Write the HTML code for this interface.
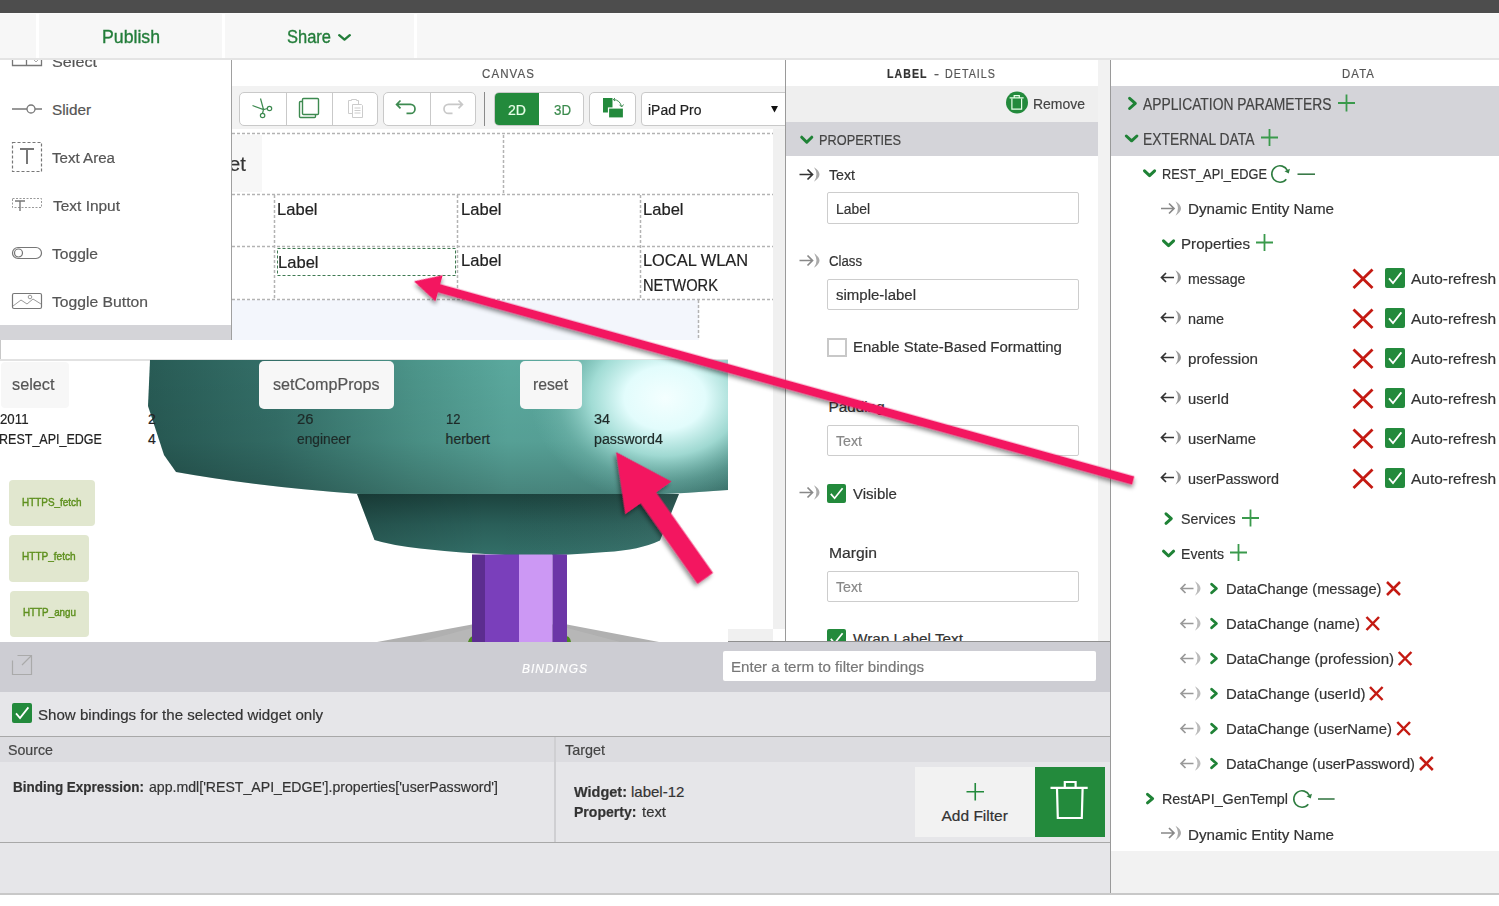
<!DOCTYPE html>
<html><head><meta charset="utf-8">
<style>
*{box-sizing:border-box;margin:0;padding:0}
html,body{width:1499px;height:906px;overflow:hidden;background:#fff;font-family:"Liberation Sans",sans-serif;color:#333}
.a{position:absolute}
.t{position:absolute;white-space:nowrap;line-height:1;-webkit-text-stroke:0.2px currentColor}
.clip{position:absolute;overflow:hidden}
svg{position:absolute;left:0;top:0;overflow:visible}
</style></head><body>
<div class="a" style="left:0px;top:0px;width:1499px;height:13px;background:#4d4d4d;"></div>
<div class="a" style="left:0px;top:13px;width:1499px;height:1px;background:#fafafa;"></div>
<div class="a" style="left:0px;top:14px;width:1499px;height:44px;background:#f7f7f7;"></div>
<div class="a" style="left:0px;top:58px;width:1499px;height:2px;background:#e4e4e4;"></div>
<div class="a" style="left:36px;top:14px;width:3px;height:44px;background:#ffffff;"></div>
<div class="a" style="left:222px;top:14px;width:3px;height:44px;background:#ffffff;"></div>
<div class="a" style="left:414px;top:14px;width:3px;height:44px;background:#ffffff;"></div>
<div class="t" style="left:102.0px;top:29.2px;font-size:17.5px;color:#237d3a;transform:scaleX(1.011);transform-origin:0 0;-webkit-text-stroke:0.35px #237d3a;">Publish</div>
<div class="t" style="left:287.0px;top:29.2px;font-size:17.5px;color:#237d3a;transform:scaleX(0.942);transform-origin:0 0;-webkit-text-stroke:0.35px #237d3a;">Share</div>
<svg width="1499" height="906"><polyline points="339.2,35.2 344.5,39.6 349.8,35.2" fill="none" stroke="#237d3a" stroke-width="2.4" stroke-linecap="round" stroke-linejoin="round"/></svg>
<div class="clip" style="left:0;top:60px;width:231px;height:280px;background:#fff">
<div class="t" style="left:52.0px;top:-6.0px;font-size:15.3px;color:#555;transform:scaleX(1.058);transform-origin:0 0;">Select</div>
<div class="t" style="left:52.0px;top:42.0px;font-size:15.3px;color:#555;">Slider</div>
<div class="t" style="left:52.0px;top:90.0px;font-size:15.3px;color:#555;transform:scaleX(0.988);transform-origin:0 0;">Text Area</div>
<div class="t" style="left:53.0px;top:138.0px;font-size:15.3px;color:#555;transform:scaleX(1.010);transform-origin:0 0;">Text Input</div>
<div class="t" style="left:52.0px;top:186.0px;font-size:15.3px;color:#555;transform:scaleX(1.020);transform-origin:0 0;">Toggle</div>
<div class="t" style="left:52.0px;top:234.0px;font-size:15.3px;color:#555;transform:scaleX(1.026);transform-origin:0 0;">Toggle Button</div>
<div class="a" style="left:0px;top:265px;width:231px;height:15px;background:#d4d4d8;"></div>
<div class="t" style="left:35.0px;top:277.3px;font-size:15px;color:#333;transform:scaleX(0.800);transform-origin:0 0;">OTHER</div>
<svg width="231" height="280"><path d="M12.5 -4V5.5H41.5V-4M26.5 -4V5.5" stroke="#777" stroke-width="1.3" fill="none"/><path d="M34 0L36 2L38 0" stroke="#aaa" fill="none"/><path d="M12 49H27M35 49H42" stroke="#777" stroke-width="1.3"/><circle cx="31" cy="49" r="4" stroke="#777" stroke-width="1.3" fill="none"/><rect x="12.5" y="82.5" width="29" height="29" stroke="#777" stroke-width="1.2" stroke-dasharray="3 2" fill="none"/><path d="M20 89H34M27 89V104" stroke="#777" stroke-width="2" fill="none"/><rect x="12.5" y="138.5" width="29" height="9" stroke="#999" stroke-width="1" stroke-dasharray="2 1.5" fill="none"/><path d="M15 141H25M20 141V151" stroke="#777" stroke-width="1.4" fill="none"/><rect x="12.5" y="187.5" width="29" height="11" rx="5.5" stroke="#777" stroke-width="1.2" fill="none"/><circle cx="18.5" cy="193" r="4" stroke="#777" stroke-width="1.2" fill="none"/><rect x="12.5" y="233.5" width="29" height="15" rx="1.5" stroke="#777" stroke-width="1.2" fill="none"/><path d="M13 246L21 240L27 244L33 239L41 244" stroke="#999" stroke-width="1" fill="none"/><circle cx="30" cy="237" r="1.8" stroke="#999" stroke-width="1" fill="none"/></svg></div>
<div class="a" style="left:231px;top:60px;width:1px;height:280px;background:#a0a0a0;"></div>
<div class="clip" style="left:232px;top:60px;width:553px;height:582px;"><div class="a" style="left:-232px;top:-60px;width:1499px;height:906px">
<div class="a" style="left:232px;top:60px;width:553px;height:582px;background:#fff;"></div>
<div class="t" style="left:481.5px;top:68.4px;font-size:12.5px;color:#555;letter-spacing:1.2px;transform:scaleX(0.919);transform-origin:0 0;">CANVAS</div>
<div class="a" style="left:232px;top:86px;width:553px;height:43px;background:#f2f2f2;"></div>
<div class="a" style="left:773px;top:129px;width:12px;height:500px;background:#f0f0f0;"></div>
<div class="a" style="left:239px;top:92px;width:139px;height:34px;border:1px solid #c9c9c9;border-radius:5px;background:#fff;overflow:hidden"><div class="a" style="left:45.5px;top:0;width:1px;height:32px;background:#c9c9c9"></div><div class="a" style="left:91.5px;top:0;width:1px;height:32px;background:#c9c9c9"></div></div>
<div class="a" style="left:383px;top:92px;width:93px;height:34px;border:1px solid #c9c9c9;border-radius:5px;background:#fff;overflow:hidden"><div class="a" style="left:45.5px;top:0;width:1px;height:32px;background:#c9c9c9"></div></div>
<div class="a" style="left:484px;top:92px;width:1px;height:34px;background:#8a8a8a;"></div>
<div class="a" style="left:494px;top:92px;width:90px;height:34px;border:1px solid #c9c9c9;border-radius:5px;background:#fff;overflow:hidden"><div class="a" style="left:0;top:0;width:44px;height:32px;background:#238a3c"></div></div>
<div class="a" style="left:589px;top:92px;width:47px;height:34px;border:1px solid #c9c9c9;border-radius:5px;background:#fff;overflow:hidden"></div>
<div class="a" style="left:641px;top:92px;width:160px;height:34px;border:1px solid #c9c9c9;border-radius:4px;background:#fff"></div>
<div class="t" style="left:508.0px;top:101.9px;font-size:15.5px;color:#e8ffe8;transform:scaleX(0.908);transform-origin:0 0;">2D</div>
<div class="t" style="left:553.5px;top:101.9px;font-size:15.5px;color:#3a8a4c;transform:scaleX(0.858);transform-origin:0 0;">3D</div>
<div class="t" style="left:647.5px;top:102.0px;font-size:15.3px;color:#222;transform:scaleX(0.912);transform-origin:0 0;">iPad Pro</div>
<div class="a" style="left:232px;top:135px;width:30px;height:57px;background:#f7f7f7;"></div>
<div class="t" style="left:219.0px;top:153.6px;font-size:20.5px;color:#333;transform:scaleX(0.987);transform-origin:0 0;">set</div>
<div class="a" style="left:232px;top:300px;width:467px;height:40px;background:#f3f6fc;"></div>
<div class="t" style="left:277.0px;top:200.6px;font-size:17px;color:#222;transform:scaleX(0.974);transform-origin:0 0;">Label</div>
<div class="t" style="left:460.5px;top:200.6px;font-size:17px;color:#222;transform:scaleX(0.974);transform-origin:0 0;">Label</div>
<div class="t" style="left:643.0px;top:200.6px;font-size:17px;color:#222;transform:scaleX(0.974);transform-origin:0 0;">Label</div>
<div class="t" style="left:278.0px;top:253.6px;font-size:17px;color:#222;transform:scaleX(0.974);transform-origin:0 0;">Label</div>
<div class="t" style="left:460.5px;top:252.1px;font-size:17px;color:#222;transform:scaleX(0.974);transform-origin:0 0;">Label</div>
<div class="t" style="left:643.0px;top:252.1px;font-size:17px;color:#222;transform:scaleX(0.964);transform-origin:0 0;">LOCAL WLAN</div>
<div class="t" style="left:643.0px;top:277.1px;font-size:17px;color:#222;transform:scaleX(0.863);transform-origin:0 0;">NETWORK</div>
<svg width="1499" height="906"><path d="M232 133.5H773" stroke="#b3b3b3" stroke-width="1.5" stroke-dasharray="3 2" fill="none"/><path d="M232 194.5H773" stroke="#b3b3b3" stroke-width="1.5" stroke-dasharray="3 2" fill="none"/><path d="M232 246.5H773" stroke="#b3b3b3" stroke-width="1.5" stroke-dasharray="3 2" fill="none"/><path d="M232 299.5H773" stroke="#b3b3b3" stroke-width="1.5" stroke-dasharray="3 2" fill="none"/><path d="M503.5 135V194" stroke="#b3b3b3" stroke-width="1.5" stroke-dasharray="3 2" fill="none"/><path d="M274.5 195V299" stroke="#b3b3b3" stroke-width="1.5" stroke-dasharray="3 2" fill="none"/><path d="M457.5 195V299" stroke="#b3b3b3" stroke-width="1.5" stroke-dasharray="3 2" fill="none"/><path d="M640.5 195V299" stroke="#b3b3b3" stroke-width="1.5" stroke-dasharray="3 2" fill="none"/><path d="M698.5 300V340" stroke="#b3b3b3" stroke-width="1.5" stroke-dasharray="3 2" fill="none"/><rect x="277.5" y="248.5" width="178" height="27" fill="none" stroke="#3f7a52" stroke-width="1" stroke-dasharray="3 2"/><path d="M260.5 98.5L263.5 109.5M252.5 105.5L263.5 109.5L267.5 108.5M263.5 109.5L262.5 113.5" stroke="#3d8a50" stroke-width="1.2" fill="none"/><circle cx="269.5" cy="108.5" r="2.2" stroke="#3d8a50" stroke-width="1.2" fill="none"/><circle cx="262.6" cy="115.5" r="2.2" stroke="#3d8a50" stroke-width="1.2" fill="none"/><rect x="299.5" y="101.5" width="16" height="16" rx="1" stroke="#3d8a50" stroke-width="1.4" fill="#fff"/><rect x="302.5" y="98.5" width="16" height="16" rx="1" stroke="#3d8a50" stroke-width="1.4" fill="#fff"/><path d="M348.5 100.5H351.5V99.5H356.5V100.5H358.5V113.5H348.5Z" stroke="#ccc" stroke-width="1" fill="#fff"/><path d="M352.5 104.5H361.5L362.5 105.5V117.5H352.5Z" stroke="#ccc" stroke-width="1" fill="#fff"/><path d="M354.5 108H360.5M354.5 110.5H360.5M354.5 113H360.5" stroke="#ccc" stroke-width="1"/><path d="M397 104.4H410.5A4.5 4.5 0 0 1 410.5 113.4H406.5M400.5 100.5L396.6 104.4L400.5 108.3" stroke="#3d8a50" stroke-width="1.7" fill="none"/><path d="M462 104.4H448.5A4.5 4.5 0 0 0 448.5 113.4H452.5M458.5 100.5L462.4 104.4L458.5 108.3" stroke="#c8c8c8" stroke-width="1.7" fill="none"/><rect x="603" y="98" width="9.5" height="14.5" fill="#238a3c"/><rect x="608.5" y="108" width="15" height="10" fill="#238a3c" stroke="#fff" stroke-width="1.2"/><path d="M613.5 99.5Q620 100 621.5 106.5M619.5 104.8L621.7 107L623.5 104.5M615 98L613.3 99.6L615 101" stroke="#3d8a50" stroke-width="1" fill="none"/><path d="M771 106H778L774.5 112.5Z" fill="#111"/></svg>
</div></div>
<div class="a" style="left:785px;top:60px;width:1px;height:582px;background:#9a9a9a;"></div>
<div class="clip" style="left:0px;top:340px;width:728px;height:302px;"><div class="a" style="left:0px;top:-340px;width:1499px;height:906px">
<div class="a" style="left:0px;top:340px;width:728px;height:302px;background:#fff;"></div>
<div class="a" style="left:0px;top:340px;width:1px;height:20px;background:#c8c8c8;"></div>
<div class="a" style="left:0px;top:359px;width:728px;height:1.5px;background:#e2e2e2;"></div>
<svg width="1499" height="906"><defs><linearGradient id="capH" x1="148" y1="0" x2="728" y2="0" gradientUnits="userSpaceOnUse"><stop offset="0" stop-color="#285b55"/><stop offset="0.22" stop-color="#346f68"/><stop offset="0.45" stop-color="#4b9388"/><stop offset="0.62" stop-color="#5aa89d"/><stop offset="0.85" stop-color="#5aa49b"/><stop offset="1" stop-color="#4a8e86"/></linearGradient><linearGradient id="capV" x1="0" y1="360" x2="0" y2="496" gradientUnits="userSpaceOnUse"><stop offset="0" stop-color="#000" stop-opacity="0"/><stop offset="0.6" stop-color="#000" stop-opacity="0.05"/><stop offset="1" stop-color="#000" stop-opacity="0.22"/></linearGradient><radialGradient id="hl" cx="665" cy="398" r="135" gradientUnits="userSpaceOnUse" gradientTransform="translate(665 398) scale(1 0.78) translate(-665 -398)"><stop offset="0" stop-color="#f4ffff"/><stop offset="0.3" stop-color="#e2fcfc"/><stop offset="0.55" stop-color="#aee6df" stop-opacity="0.85"/><stop offset="0.8" stop-color="#7fc2b8" stop-opacity="0.35"/><stop offset="1" stop-color="#6fb8ae" stop-opacity="0"/></radialGradient><linearGradient id="low" x1="0" y1="494" x2="0" y2="556" gradientUnits="userSpaceOnUse"><stop offset="0" stop-color="#1c433e"/><stop offset="0.5" stop-color="#2a5f59"/><stop offset="1" stop-color="#336f68"/></linearGradient><linearGradient id="lowH" x1="357" y1="0" x2="680" y2="0" gradientUnits="userSpaceOnUse"><stop offset="0" stop-color="#000" stop-opacity="0.15"/><stop offset="0.4" stop-color="#000" stop-opacity="0"/><stop offset="1" stop-color="#fff" stop-opacity="0.05"/></linearGradient></defs><path d="M150 360H728V490Q640 497 540 497Q420 497 360 494Q260 487 176 472L164 455L148 406Z" fill="url(#capH)"/><path d="M150 360H728V490Q640 497 540 497Q420 497 360 494Q260 487 176 472L164 455L148 406Z" fill="url(#capV)"/><path d="M150 360H728V490Q640 497 540 497Q420 497 360 494Q260 487 176 472L164 455L148 406Z" fill="url(#hl)"/><path d="M357 494H679L660 540.5Q640 550 606 552Q560 556 513 555.5Q460 553 420 548.5Q390 545 374.5 540Z" fill="url(#low)"/><path d="M357 494H679L660 540.5Q640 550 606 552Q560 556 513 555.5Q460 553 420 548.5Q390 545 374.5 540Z" fill="url(#lowH)"/><path d="M377 642L472 624.5H567L659 642Z" fill="#b0b0b0"/><path d="M420 642L472 628H567L620 642Z" fill="#bdbdbd" opacity="0.6"/><path d="M468 642Q470 634 480 636V642Z" fill="#4d8a22"/><path d="M571 642Q570 634 560 636V642Z" fill="#4d8a22"/><rect x="472" y="554.5" width="13" height="88" fill="#5c2d90"/><rect x="485" y="554.5" width="34" height="88" fill="#7a3fbb"/><rect x="519" y="554.5" width="33.5" height="88" fill="#cc98f4"/><rect x="552.5" y="554.5" width="14.5" height="88" fill="#6c36a7"/></svg>
<div class="a" style="left:1px;top:361.5px;width:68px;height:46px;background:#f7f7f7;border-radius:4px"></div>
<div class="a" style="left:259px;top:360.5px;width:135px;height:48px;background:#f7f7f7;border-radius:5px"></div>
<div class="a" style="left:519.5px;top:360.5px;width:62px;height:48px;background:#f7f7f7;border-radius:5px"></div>
<div class="t" style="left:12.3px;top:376.5px;font-size:16px;color:#555;transform:scaleX(1.017);transform-origin:0 0;">select</div>
<div class="t" style="left:273.0px;top:376.5px;font-size:16px;color:#555;transform:scaleX(1.006);transform-origin:0 0;">setCompProps</div>
<div class="t" style="left:533.0px;top:376.5px;font-size:16px;color:#555;transform:scaleX(0.984);transform-origin:0 0;">reset</div>
<div class="t" style="left:0.0px;top:412.1px;font-size:14px;color:#222;transform:scaleX(0.947);transform-origin:0 0;">2011</div>
<div class="t" style="left:-1.0px;top:432.1px;font-size:14px;color:#222;transform:scaleX(0.894);transform-origin:0 0;">REST_API_EDGE</div>
<div class="t" style="left:148.0px;top:412.1px;font-size:14px;color:#222;">2</div>
<div class="t" style="left:148.0px;top:432.1px;font-size:14px;color:#222;">4</div>
<div class="t" style="left:296.7px;top:412.1px;font-size:14px;color:#1e2a28;transform:scaleX(1.060);transform-origin:0 0;">26</div>
<div class="t" style="left:296.7px;top:432.1px;font-size:14px;color:#1e2a28;transform:scaleX(0.982);transform-origin:0 0;">engineer</div>
<div class="t" style="left:445.6px;top:412.1px;font-size:14px;color:#1e2a28;transform:scaleX(0.931);transform-origin:0 0;">12</div>
<div class="t" style="left:445.6px;top:432.1px;font-size:14px;color:#1e2a28;">herbert</div>
<div class="t" style="left:594.0px;top:412.1px;font-size:14px;color:#1e2a28;transform:scaleX(1.028);transform-origin:0 0;">34</div>
<div class="t" style="left:594.0px;top:432.1px;font-size:14px;color:#1e2a28;transform:scaleX(1.019);transform-origin:0 0;">password4</div>
<div class="a" style="left:9.3px;top:480px;width:85.4px;height:46.2px;background:#e1e7cf;border-radius:4px"></div>
<div class="t" style="left:21.9px;top:496.8px;font-size:11.5px;color:#5e901e;transform:scaleX(0.862);transform-origin:0 0;-webkit-text-stroke:0.45px #5e901e;">HTTPS_fetch</div>
<div class="a" style="left:9.3px;top:535.2px;width:79.6px;height:47.0px;background:#e1e7cf;border-radius:4px"></div>
<div class="t" style="left:21.9px;top:551.3px;font-size:11.5px;color:#5e901e;transform:scaleX(0.874);transform-origin:0 0;-webkit-text-stroke:0.45px #5e901e;">HTTP_fetch</div>
<div class="a" style="left:10.1px;top:591.3px;width:78.8px;height:46.2px;background:#e1e7cf;border-radius:4px"></div>
<div class="t" style="left:23.0px;top:607.3px;font-size:11.5px;color:#5e901e;transform:scaleX(0.855);transform-origin:0 0;-webkit-text-stroke:0.45px #5e901e;">HTTP_angu</div>
</div></div>
<div class="a" style="left:728px;top:629px;width:45px;height:12px;background:#f0f0f0;"></div>
<div class="clip" style="left:786px;top:60px;width:324px;height:582px;"><div class="a" style="left:-786px;top:-60px;width:1499px;height:906px">
<div class="a" style="left:786px;top:60px;width:324px;height:582px;background:#fff;"></div>
<div class="a" style="left:1098px;top:60px;width:12px;height:582px;background:#f2f2f2;"></div>
<div class="t" style="left:886.5px;top:68.4px;font-size:12.5px;color:#333;font-weight:bold;letter-spacing:1.2px;transform:scaleX(0.850);transform-origin:0 0;">LABEL</div>
<div class="t" style="left:934.0px;top:68.4px;font-size:12.5px;color:#555;transform:scaleX(1.201);transform-origin:0 0;">-</div>
<div class="t" style="left:945.0px;top:68.4px;font-size:12.5px;color:#555;letter-spacing:1.2px;transform:scaleX(0.856);transform-origin:0 0;">DETAILS</div>
<div class="a" style="left:786px;top:86px;width:312px;height:35.5px;background:#efefef;"></div>
<div class="a" style="left:786px;top:121.5px;width:312px;height:34.5px;background:#d4d4d9;"></div>
<div class="t" style="left:1032.5px;top:96.0px;font-size:15.3px;color:#444;transform:scaleX(0.913);transform-origin:0 0;">Remove</div>
<div class="t" style="left:818.5px;top:132.0px;font-size:15.3px;color:#444;transform:scaleX(0.834);transform-origin:0 0;">PROPERTIES</div>
<div class="t" style="left:828.5px;top:167.0px;font-size:15.3px;color:#333;transform:scaleX(0.927);transform-origin:0 0;">Text</div>
<div class="a" style="left:827px;top:192px;width:252px;height:31.5px;border:1px solid #cdcdcd;border-radius:2px;background:#fff"></div>
<div class="t" style="left:835.5px;top:201.0px;font-size:15.3px;color:#333;transform:scaleX(0.908);transform-origin:0 0;">Label</div>
<div class="t" style="left:828.5px;top:253.0px;font-size:15.3px;color:#333;transform:scaleX(0.863);transform-origin:0 0;">Class</div>
<div class="a" style="left:827px;top:278.5px;width:252px;height:31.5px;border:1px solid #cdcdcd;border-radius:2px;background:#fff"></div>
<div class="t" style="left:835.5px;top:287.0px;font-size:15.3px;color:#333;transform:scaleX(0.980);transform-origin:0 0;">simple-label</div>
<div class="a" style="left:827px;top:338px;width:20px;height:19px;border:2.5px solid #c8c8c8;background:#fff"></div>
<div class="t" style="left:853.0px;top:339.0px;font-size:15.3px;color:#333;transform:scaleX(0.979);transform-origin:0 0;">Enable State-Based Formatting</div>
<div class="t" style="left:828.5px;top:399.0px;font-size:15.3px;color:#333;">Padding</div>
<div class="a" style="left:827px;top:424.5px;width:252px;height:31.0px;border:1px solid #cdcdcd;border-radius:2px;background:#fff"></div>
<div class="t" style="left:835.5px;top:433.0px;font-size:15.3px;color:#888;transform:scaleX(0.927);transform-origin:0 0;">Text</div>
<div class="t" style="left:853.0px;top:485.5px;font-size:15.3px;color:#333;transform:scaleX(0.982);transform-origin:0 0;">Visible</div>
<div class="t" style="left:828.5px;top:545.0px;font-size:15.3px;color:#333;transform:scaleX(1.026);transform-origin:0 0;">Margin</div>
<div class="a" style="left:827px;top:570.5px;width:252px;height:31.0px;border:1px solid #cdcdcd;border-radius:2px;background:#fff"></div>
<div class="t" style="left:835.5px;top:579.0px;font-size:15.3px;color:#888;transform:scaleX(0.927);transform-origin:0 0;">Text</div>
<div class="t" style="left:853.0px;top:631.0px;font-size:15.3px;color:#333;">Wrap Label Text</div>
<svg width="1499" height="906"><circle cx="1017" cy="102.5" r="11" fill="#238a3c"/><path d="M1011.9 98.5V109.2H1021.6V98.5" stroke="#e8ffe8" stroke-width="1.2" fill="none"/><path d="M1009.6 97.8H1023.6M1014.2 97.8V95.6H1019.3V97.8" stroke="#e8ffe8" stroke-width="1.2" fill="none"/><polyline points="801.7,137.2 806.75,142.2 811.8,137.2" fill="none" stroke="#1f8236" stroke-width="3" stroke-linecap="round" stroke-linejoin="round"/><path d="M799.5 174.5H812.5M807.5 169.5L812.5 174.5L807.5 179.5" stroke="#333" stroke-width="1.7" fill="none"/><path d="M814.0 167.3Q825.0 174.5 814.0 181.7Q819.0 174.5 814.0 167.3Z" fill="#aaa"/><path d="M799.5 260.5H812.5M807.5 255.5L812.5 260.5L807.5 265.5" stroke="#888" stroke-width="1.7" fill="none"/><path d="M814.0 253.3Q825.0 260.5 814.0 267.7Q819.0 260.5 814.0 253.3Z" fill="#aaa"/><path d="M799.5 492.5H812.5M807.5 487.5L812.5 492.5L807.5 497.5" stroke="#888" stroke-width="1.7" fill="none"/><path d="M814.0 485.3Q825.0 492.5 814.0 499.7Q819.0 492.5 814.0 485.3Z" fill="#aaa"/><rect x="827" y="484" width="19" height="19" rx="2" fill="#238a3c"/><polyline points="830.8,493.88 834.6,498.25 842.58,488.18" fill="none" stroke="#fff" stroke-width="1.71"/><rect x="827" y="629" width="19" height="19" rx="2" fill="#238a3c"/><polyline points="830.8,638.88 834.6,643.25 842.58,633.18" fill="none" stroke="#fff" stroke-width="1.71"/></svg>
</div></div>
<div class="a" style="left:1111px;top:60px;width:388px;height:833px;background:#f2f2f2;"></div>
<div class="a" style="left:1111px;top:60px;width:388px;height:791px;background:#fff;"></div>
<div class="t" style="left:1342.0px;top:68.4px;font-size:12.5px;color:#555;letter-spacing:1.2px;transform:scaleX(0.910);transform-origin:0 0;">DATA</div>
<div class="a" style="left:1111px;top:86px;width:388px;height:70px;background:#d4d4d9;"></div>
<div class="t" style="left:1142.6px;top:96.5px;font-size:16px;color:#444;transform:scaleX(0.864);transform-origin:0 0;">APPLICATION PARAMETERS</div>
<div class="t" style="left:1142.6px;top:131.5px;font-size:16px;color:#444;transform:scaleX(0.867);transform-origin:0 0;">EXTERNAL DATA</div>
<div class="t" style="left:1162.0px;top:165.5px;font-size:15.3px;color:#333;transform:scaleX(0.834);transform-origin:0 0;">REST_API_EDGE</div>
<div class="t" style="left:1188.0px;top:201.0px;font-size:15.3px;color:#333;transform:scaleX(0.993);transform-origin:0 0;">Dynamic Entity Name</div>
<div class="t" style="left:1180.6px;top:235.8px;font-size:15.3px;color:#333;transform:scaleX(0.990);transform-origin:0 0;">Properties</div>
<div class="t" style="left:1188.0px;top:270.7px;font-size:15.3px;color:#333;transform:scaleX(0.926);transform-origin:0 0;">message</div>
<div class="t" style="left:1410.5px;top:270.7px;font-size:15.3px;color:#333;transform:scaleX(1.010);transform-origin:0 0;">Auto-refresh</div>
<div class="t" style="left:1188.0px;top:310.7px;font-size:15.3px;color:#333;transform:scaleX(0.941);transform-origin:0 0;">name</div>
<div class="t" style="left:1410.5px;top:310.7px;font-size:15.3px;color:#333;transform:scaleX(1.010);transform-origin:0 0;">Auto-refresh</div>
<div class="t" style="left:1188.0px;top:350.7px;font-size:15.3px;color:#333;transform:scaleX(0.992);transform-origin:0 0;">profession</div>
<div class="t" style="left:1410.5px;top:350.7px;font-size:15.3px;color:#333;transform:scaleX(1.010);transform-origin:0 0;">Auto-refresh</div>
<div class="t" style="left:1188.0px;top:390.7px;font-size:15.3px;color:#333;transform:scaleX(0.964);transform-origin:0 0;">userId</div>
<div class="t" style="left:1410.5px;top:390.7px;font-size:15.3px;color:#333;transform:scaleX(1.010);transform-origin:0 0;">Auto-refresh</div>
<div class="t" style="left:1188.0px;top:430.7px;font-size:15.3px;color:#333;transform:scaleX(0.964);transform-origin:0 0;">userName</div>
<div class="t" style="left:1410.5px;top:430.7px;font-size:15.3px;color:#333;transform:scaleX(1.010);transform-origin:0 0;">Auto-refresh</div>
<div class="t" style="left:1188.0px;top:470.7px;font-size:15.3px;color:#333;transform:scaleX(0.939);transform-origin:0 0;">userPassword</div>
<div class="t" style="left:1410.5px;top:470.7px;font-size:15.3px;color:#333;transform:scaleX(1.010);transform-origin:0 0;">Auto-refresh</div>
<div class="t" style="left:1180.6px;top:510.5px;font-size:15.3px;color:#333;transform:scaleX(0.929);transform-origin:0 0;">Services</div>
<div class="t" style="left:1180.6px;top:545.5px;font-size:15.3px;color:#333;transform:scaleX(0.919);transform-origin:0 0;">Events</div>
<div class="t" style="left:1225.5px;top:580.5px;font-size:15.3px;color:#333;transform:scaleX(0.957);transform-origin:0 0;">DataChange (message)</div>
<div class="t" style="left:1225.5px;top:615.5px;font-size:15.3px;color:#333;transform:scaleX(0.967);transform-origin:0 0;">DataChange (name)</div>
<div class="t" style="left:1225.5px;top:650.5px;font-size:15.3px;color:#333;transform:scaleX(0.983);transform-origin:0 0;">DataChange (profession)</div>
<div class="t" style="left:1225.5px;top:685.5px;font-size:15.3px;color:#333;transform:scaleX(0.976);transform-origin:0 0;">DataChange (userId)</div>
<div class="t" style="left:1225.5px;top:720.5px;font-size:15.3px;color:#333;transform:scaleX(0.971);transform-origin:0 0;">DataChange (userName)</div>
<div class="t" style="left:1225.5px;top:755.5px;font-size:15.3px;color:#333;transform:scaleX(0.958);transform-origin:0 0;">DataChange (userPassword)</div>
<div class="t" style="left:1161.5px;top:791.3px;font-size:15.3px;color:#333;transform:scaleX(0.938);transform-origin:0 0;">RestAPI_GenTempl</div>
<div class="t" style="left:1188.0px;top:826.5px;font-size:15.3px;color:#333;transform:scaleX(0.993);transform-origin:0 0;">Dynamic Entity Name</div>
<svg width="1499" height="906"><path d="M1161.5 277.5H1174M1166 273.0L1161.5 277.5L1166 282.0" stroke="#333" stroke-width="1.7" fill="none"/><path d="M1175.5 270.3Q1186.5 277.5 1175.5 284.7Q1180.5 277.5 1175.5 270.3Z" fill="#999"/><path d="M1353.5 269.5L1372.5 288M1372.5 269.5L1353.5 288" stroke="#c41a12" stroke-width="2.8" fill="none"/><rect x="1385" y="268" width="20" height="20" rx="2" fill="#238a3c"/><polyline points="1389.0,278.4 1393.0,283.0 1401.4,272.4" fill="none" stroke="#fff" stroke-width="1.80"/><path d="M1161.5 317.5H1174M1166 313.0L1161.5 317.5L1166 322.0" stroke="#333" stroke-width="1.7" fill="none"/><path d="M1175.5 310.3Q1186.5 317.5 1175.5 324.7Q1180.5 317.5 1175.5 310.3Z" fill="#999"/><path d="M1353.5 309.5L1372.5 328M1372.5 309.5L1353.5 328" stroke="#c41a12" stroke-width="2.8" fill="none"/><rect x="1385" y="308" width="20" height="20" rx="2" fill="#238a3c"/><polyline points="1389.0,318.4 1393.0,323.0 1401.4,312.4" fill="none" stroke="#fff" stroke-width="1.80"/><path d="M1161.5 357.5H1174M1166 353.0L1161.5 357.5L1166 362.0" stroke="#333" stroke-width="1.7" fill="none"/><path d="M1175.5 350.3Q1186.5 357.5 1175.5 364.7Q1180.5 357.5 1175.5 350.3Z" fill="#999"/><path d="M1353.5 349.5L1372.5 368M1372.5 349.5L1353.5 368" stroke="#c41a12" stroke-width="2.8" fill="none"/><rect x="1385" y="348" width="20" height="20" rx="2" fill="#238a3c"/><polyline points="1389.0,358.4 1393.0,363.0 1401.4,352.4" fill="none" stroke="#fff" stroke-width="1.80"/><path d="M1161.5 397.5H1174M1166 393.0L1161.5 397.5L1166 402.0" stroke="#333" stroke-width="1.7" fill="none"/><path d="M1175.5 390.3Q1186.5 397.5 1175.5 404.7Q1180.5 397.5 1175.5 390.3Z" fill="#999"/><path d="M1353.5 389.5L1372.5 408M1372.5 389.5L1353.5 408" stroke="#c41a12" stroke-width="2.8" fill="none"/><rect x="1385" y="388" width="20" height="20" rx="2" fill="#238a3c"/><polyline points="1389.0,398.4 1393.0,403.0 1401.4,392.4" fill="none" stroke="#fff" stroke-width="1.80"/><path d="M1161.5 437.5H1174M1166 433.0L1161.5 437.5L1166 442.0" stroke="#333" stroke-width="1.7" fill="none"/><path d="M1175.5 430.3Q1186.5 437.5 1175.5 444.7Q1180.5 437.5 1175.5 430.3Z" fill="#999"/><path d="M1353.5 429.5L1372.5 448M1372.5 429.5L1353.5 448" stroke="#c41a12" stroke-width="2.8" fill="none"/><rect x="1385" y="428" width="20" height="20" rx="2" fill="#238a3c"/><polyline points="1389.0,438.4 1393.0,443.0 1401.4,432.4" fill="none" stroke="#fff" stroke-width="1.80"/><path d="M1161.5 477.5H1174M1166 473.0L1161.5 477.5L1166 482.0" stroke="#333" stroke-width="1.7" fill="none"/><path d="M1175.5 470.3Q1186.5 477.5 1175.5 484.7Q1180.5 477.5 1175.5 470.3Z" fill="#999"/><path d="M1353.5 469.5L1372.5 488M1372.5 469.5L1353.5 488" stroke="#c41a12" stroke-width="2.8" fill="none"/><rect x="1385" y="468" width="20" height="20" rx="2" fill="#238a3c"/><polyline points="1389.0,478.4 1393.0,483.0 1401.4,472.4" fill="none" stroke="#fff" stroke-width="1.80"/><path d="M1181.0 588.5H1193.5M1185.5 584.0L1181.0 588.5L1185.5 593.0" stroke="#999" stroke-width="1.7" fill="none"/><path d="M1195.0 581.3Q1206.0 588.5 1195.0 595.7Q1200.0 588.5 1195.0 581.3Z" fill="#bbb"/><polyline points="1211.6,584.2 1216.4,588.5 1211.6,592.8" fill="none" stroke="#1f8236" stroke-width="2.8" stroke-linecap="round" stroke-linejoin="round"/><path d="M1387 582.0L1400 595.0M1400 582.0L1387 595.0" stroke="#c41a12" stroke-width="2.5" fill="none"/><path d="M1181.0 623.5H1193.5M1185.5 619.0L1181.0 623.5L1185.5 628.0" stroke="#999" stroke-width="1.7" fill="none"/><path d="M1195.0 616.3Q1206.0 623.5 1195.0 630.7Q1200.0 623.5 1195.0 616.3Z" fill="#bbb"/><polyline points="1211.6,619.2 1216.4,623.5 1211.6,627.8" fill="none" stroke="#1f8236" stroke-width="2.8" stroke-linecap="round" stroke-linejoin="round"/><path d="M1366.5 617.0L1379 630.0M1379 617.0L1366.5 630.0" stroke="#c41a12" stroke-width="2.5" fill="none"/><path d="M1181.0 658.5H1193.5M1185.5 654.0L1181.0 658.5L1185.5 663.0" stroke="#999" stroke-width="1.7" fill="none"/><path d="M1195.0 651.3Q1206.0 658.5 1195.0 665.7Q1200.0 658.5 1195.0 651.3Z" fill="#bbb"/><polyline points="1211.6,654.2 1216.4,658.5 1211.6,662.8" fill="none" stroke="#1f8236" stroke-width="2.8" stroke-linecap="round" stroke-linejoin="round"/><path d="M1398.7 652.0L1411.4 665.0M1411.4 652.0L1398.7 665.0" stroke="#c41a12" stroke-width="2.5" fill="none"/><path d="M1181.0 693.5H1193.5M1185.5 689.0L1181.0 693.5L1185.5 698.0" stroke="#999" stroke-width="1.7" fill="none"/><path d="M1195.0 686.3Q1206.0 693.5 1195.0 700.7Q1200.0 693.5 1195.0 686.3Z" fill="#bbb"/><polyline points="1211.6,689.2 1216.4,693.5 1211.6,697.8" fill="none" stroke="#1f8236" stroke-width="2.8" stroke-linecap="round" stroke-linejoin="round"/><path d="M1370 687.0L1382.6 700.0M1382.6 687.0L1370 700.0" stroke="#c41a12" stroke-width="2.5" fill="none"/><path d="M1181.0 728.5H1193.5M1185.5 724.0L1181.0 728.5L1185.5 733.0" stroke="#999" stroke-width="1.7" fill="none"/><path d="M1195.0 721.3Q1206.0 728.5 1195.0 735.7Q1200.0 728.5 1195.0 721.3Z" fill="#bbb"/><polyline points="1211.6,724.2 1216.4,728.5 1211.6,732.8" fill="none" stroke="#1f8236" stroke-width="2.8" stroke-linecap="round" stroke-linejoin="round"/><path d="M1397.3 722.0L1410 735.0M1410 722.0L1397.3 735.0" stroke="#c41a12" stroke-width="2.5" fill="none"/><path d="M1181.0 763.5H1193.5M1185.5 759.0L1181.0 763.5L1185.5 768.0" stroke="#999" stroke-width="1.7" fill="none"/><path d="M1195.0 756.3Q1206.0 763.5 1195.0 770.7Q1200.0 763.5 1195.0 756.3Z" fill="#bbb"/><polyline points="1211.6,759.2 1216.4,763.5 1211.6,767.8" fill="none" stroke="#1f8236" stroke-width="2.8" stroke-linecap="round" stroke-linejoin="round"/><path d="M1420 757.0L1432.8 770.0M1432.8 757.0L1420 770.0" stroke="#c41a12" stroke-width="2.5" fill="none"/><polyline points="1129.6,98.3 1135.3,103.4 1129.6,108.5" fill="none" stroke="#1f8236" stroke-width="3" stroke-linecap="round" stroke-linejoin="round"/><path d="M1338 103.0H1355M1346.5 94.5V111.5" stroke="#3a9a4c" stroke-width="1.8" fill="none"/><polyline points="1126.3,136 1131.6,140.8 1136.9,136" fill="none" stroke="#1f8236" stroke-width="3" stroke-linecap="round" stroke-linejoin="round"/><path d="M1261 137.5H1278M1269.5 129V146" stroke="#3a9a4c" stroke-width="1.8" fill="none"/><polyline points="1144.5,170.8 1149.55,175.6 1154.6,170.8" fill="none" stroke="#1f8236" stroke-width="3" stroke-linecap="round" stroke-linejoin="round"/><path d="M1286.28 179.27A8.2 8.2 0 1 1 1287.43 170.53" stroke="#2e7d40" stroke-width="1.6" fill="none"/><path d="M1288.78 173.43L1289.94 168.81L1284.50 171.35Z" fill="#2e7d40"/><path d="M1297.5 174.2H1315" stroke="#3a7a48" stroke-width="1.6" fill="none"/><path d="M1161 208.5H1174M1169 203.5L1174 208.5L1169 213.5" stroke="#888" stroke-width="1.7" fill="none"/><path d="M1175.5 201.3Q1186.5 208.5 1175.5 215.7Q1180.5 208.5 1175.5 201.3Z" fill="#aaa"/><polyline points="1163.5,240.8 1168.55,245.6 1173.6,240.8" fill="none" stroke="#1f8236" stroke-width="3" stroke-linecap="round" stroke-linejoin="round"/><path d="M1256 242.5H1273M1264.5 234V251" stroke="#3a9a4c" stroke-width="1.8" fill="none"/><polyline points="1166,513.8 1171.3,518.55 1166,523.3" fill="none" stroke="#1f8236" stroke-width="3" stroke-linecap="round" stroke-linejoin="round"/><path d="M1242 518.0H1259M1250.5 509.5V526.5" stroke="#3a9a4c" stroke-width="1.8" fill="none"/><polyline points="1163.5,551.2 1168.55,556 1173.6,551.2" fill="none" stroke="#1f8236" stroke-width="3" stroke-linecap="round" stroke-linejoin="round"/><path d="M1230 552.5H1247M1238.5 544V561" stroke="#3a9a4c" stroke-width="1.8" fill="none"/><polyline points="1147.5,794.3 1152.6,798.55 1147.5,802.8" fill="none" stroke="#1f8236" stroke-width="3" stroke-linecap="round" stroke-linejoin="round"/><path d="M1308.28 804.27A8.2 8.2 0 1 1 1309.43 795.53" stroke="#2e7d40" stroke-width="1.6" fill="none"/><path d="M1310.78 798.43L1311.94 793.81L1306.50 796.35Z" fill="#2e7d40"/><path d="M1318 799H1334.6" stroke="#3a7a48" stroke-width="1.6" fill="none"/><path d="M1161 833H1174M1169 828L1174 833L1169 838" stroke="#888" stroke-width="1.7" fill="none"/><path d="M1175.5 825.8Q1186.5 833 1175.5 840.2Q1180.5 833 1175.5 825.8Z" fill="#aaa"/></svg>
<div class="a" style="left:1110px;top:60px;width:1px;height:833px;background:#9a9a9a;"></div>
<div class="a" style="left:0px;top:642px;width:1110px;height:251px;background:#e6e6e9;"></div>
<div class="a" style="left:0px;top:642px;width:1110px;height:50px;background:#cdcdd3;"></div>
<div class="a" style="left:728px;top:641px;width:382px;height:1px;background:#8f8f8f;"></div>
<div class="t" style="left:521.5px;top:662.9px;font-size:12.5px;color:#fff;font-style:italic;letter-spacing:1.1px;transform:scaleX(0.953);transform-origin:0 0;">BINDINGS</div>
<div class="a" style="left:723px;top:651px;width:373px;height:30px;background:#fff;border-radius:2px"></div>
<div class="t" style="left:731.0px;top:659.3px;font-size:15px;color:#777;transform:scaleX(1.007);transform-origin:0 0;">Enter a term to filter bindings</div>
<div class="t" style="left:37.5px;top:707.0px;font-size:15.3px;color:#333;transform:scaleX(0.986);transform-origin:0 0;">Show bindings for the selected widget only</div>
<div class="a" style="left:0px;top:736px;width:1110px;height:1px;background:#a8a8a8;"></div>
<div class="a" style="left:0px;top:737px;width:1110px;height:25px;background:#dcdce0;"></div>
<div class="t" style="left:7.5px;top:742.3px;font-size:15px;color:#444;transform:scaleX(0.947);transform-origin:0 0;">Source</div>
<div class="t" style="left:564.5px;top:742.3px;font-size:15px;color:#444;transform:scaleX(0.960);transform-origin:0 0;">Target</div>
<div class="a" style="left:554px;top:737px;width:2px;height:105px;background:#cfcfd2;"></div>
<div class="a" style="left:0px;top:842px;width:1110px;height:1px;background:#a8a8a8;"></div>
<div class="t" style="left:12.7px;top:779.3px;font-size:15px;color:#333;font-weight:bold;transform:scaleX(0.898);transform-origin:0 0;">Binding Expression:</div>
<div class="t" style="left:149.0px;top:779.3px;font-size:15px;color:#333;transform:scaleX(0.941);transform-origin:0 0;">app.mdl['REST_API_EDGE'].properties['userPassword']</div>
<div class="t" style="left:574.3px;top:784.3px;font-size:15px;color:#333;font-weight:bold;transform:scaleX(0.966);transform-origin:0 0;">Widget:</div>
<div class="t" style="left:631.0px;top:784.3px;font-size:15px;color:#333;">label-12</div>
<div class="t" style="left:574.3px;top:804.3px;font-size:15px;color:#333;font-weight:bold;transform:scaleX(0.937);transform-origin:0 0;">Property:</div>
<div class="t" style="left:641.5px;top:804.3px;font-size:15px;color:#333;transform:scaleX(0.993);transform-origin:0 0;">text</div>
<div class="a" style="left:915px;top:767px;width:120px;height:69.5px;background:#f2f2f2;"></div>
<div class="a" style="left:1035px;top:767px;width:70px;height:69.5px;background:#238a3c;"></div>
<div class="t" style="left:941.5px;top:807.9px;font-size:15.5px;color:#333;-webkit-text-stroke:0.2px #333;">Add Filter</div>
<svg width="1499" height="906"><path d="M12.5 660.5V674.5H31.5V655.5H17.5M24 655.5H31.5V663M31.5 655.5L22 665" stroke="#aaa" stroke-width="1.2" fill="none"/><rect x="12" y="703" width="20" height="20" rx="2" fill="#238a3c"/><polyline points="16.0,713.4 20.0,718.0 28.4,707.4" fill="none" stroke="#fff" stroke-width="1.80"/><path d="M966.5 791.75H984M975.25 783V800.5" stroke="#238a3c" stroke-width="1.6" fill="none"/><path d="M1057 788.5L1057.8 818H1081.8L1082.6 788.5M1050.5 787.8H1087.7M1064.8 787.8V782H1075.6V787.8" stroke="#fff" stroke-width="2.2" fill="none"/></svg>
<div class="a" style="left:0px;top:893px;width:1499px;height:1.5px;background:#c8c8c8;"></div>
<div class="a" style="left:0px;top:894.5px;width:1499px;height:12px;background:#fff;"></div>
<svg width="1499" height="906" style="z-index:10"><defs><filter id="sh" x="-20%" y="-20%" width="140%" height="140%"><feDropShadow dx="1" dy="3" stdDeviation="2.2" flood-color="#000" flood-opacity="0.45"/></filter></defs><g transform="translate(414 281.3) rotate(15.481)"><polygon points="0.0,0.0 26.0,-13.5 26.0,-4.3 746.3,-4.3 746.3,4.3 26.0,4.3 26.0,13.5" fill="#f31460" filter="url(#sh)"/></g><g transform="translate(616.1 452.1) rotate(54.768)"><polygon points="0.0,0.0 56.0,-28.2 56.0,-9.4 154.6,-9.4 154.6,9.4 56.0,9.4 56.0,28.2" fill="#f31460" filter="url(#sh)"/></g></svg>

</body></html>
